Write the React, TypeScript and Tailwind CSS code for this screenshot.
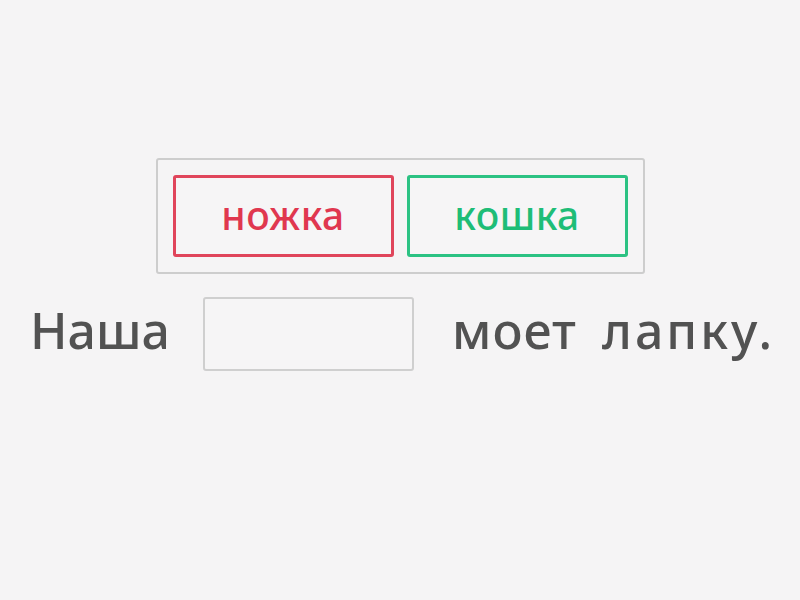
const words = [
  { id: "a", text: "ножка", color: "text-[#e0374f]", border: "border-[#e0455b]" },
  { id: "b", text: "кошка", color: "text-[#1ebd77]", border: "border-[#2cc283]" },
];

function WordCard({ text, color, border }: { text: string; color: string; border: string }) {
  return (
    <div
      className={`w-[221px] h-[82px] flex items-center justify-center border-[3px] rounded-[3px] bg-[#f6f5f6] ${border}`}
    >
      <span
        className={`text-[39px] font-medium leading-none pb-1 tracking-[0.5px] ${color}`}
        style={{ fontFamily: '"Noto Sans", sans-serif' }}
      >
        {text}
      </span>
    </div>
  );
}

export default function App() {
  return (
    <div
      className="w-[800px] h-[600px] bg-[#f5f4f5] flex flex-col items-center pt-[158px] text-[#525252]"
      style={{ fontFamily: '"Noto Sans", "DejaVu Sans", sans-serif' }}
    >
      <div className="flex gap-[13px] p-[15px] border-2 border-[#cdcdcd] rounded-[3px]">
        {words.map((w) => (
          <WordCard key={w.id} text={w.text} color={w.color} border={w.border} />
        ))}
      </div>

      <div className="w-full flex items-center mt-[23px] pl-[30px] text-[50px] font-medium leading-none">
        <span className="w-[135px] pb-2">Наша</span>
        <div className="ml-[38px] w-[211px] h-[74px] border-2 border-[#cfcfcf] rounded-[3px] bg-[#f6f5f6]" />
        <span className="ml-[38px] w-[125px] pb-2 tracking-[1px]">моет</span>
        <span className="ml-[25px] pb-2 tracking-[3px]">лапку.</span>
      </div>
    </div>
  );
}
